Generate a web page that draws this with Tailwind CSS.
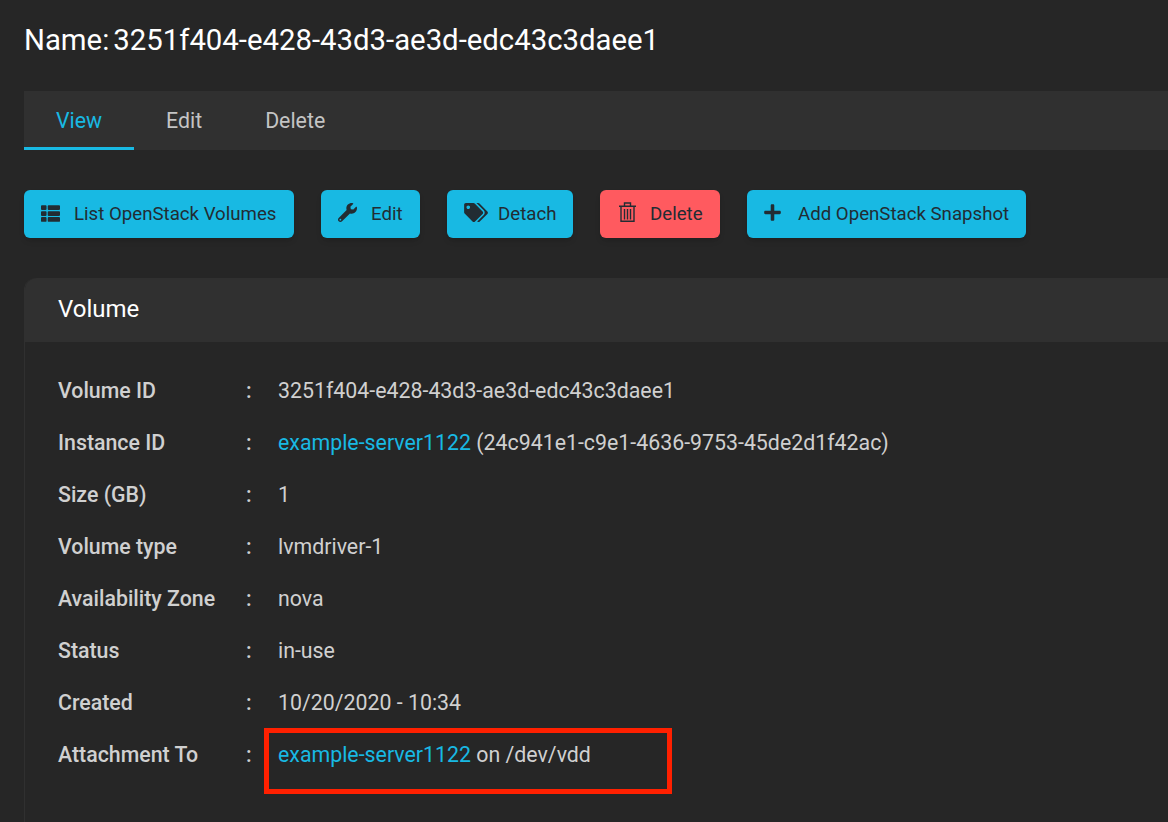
<!DOCTYPE html>
<html lang="en">
<head>
  <meta charset="UTF-8" />
  <title>Volume</title>
  <script src="https://cdn.jsdelivr.net/npm/@tailwindcss/browser@4"></script>
</head>
<body class="bg-[#262626] h-[822px] overflow-hidden font-['Roboto',sans-serif] text-[#d0d0d0]">
  <div class="relative pl-6 h-[822px] overflow-hidden">
    <!-- Title -->
    <h1 class="flex gap-[4px] pt-[22px] h-[91px] text-[29.33px] leading-[36px] text-white">
      <span>Name:</span><span>3251f404-e428-43d3-ae3d-edc43c3daee1</span>
    </h1>

    <!-- Tabs -->
    <div class="flex h-[59px] bg-[#303030] text-[21.33px]">
      <a class="w-[110px] flex items-center justify-center pt-[3px] text-[#18b9e3] border-b-[3px] border-[#18b9e3]">View</a>
      <a class="ml-[32px] flex items-center text-[#c4c4c4]">Edit</a>
      <a class="ml-[63px] flex items-center text-[#c4c4c4]">Delete</a>
    </div>

    <!-- Action buttons -->
    <div class="flex gap-[27px] mt-[40px] text-[18.67px] text-[#222c33]">
      <button class="flex items-center h-[48px] w-[270px] pl-[17px] pb-[1px] rounded-md bg-[#18b9e3] shadow-md">
        <svg class="w-[19px] h-[19px] mr-[14px] mb-[1px] fill-[#222c33]" viewBox="0 0 512 512"><path d="M149.333 216v80c0 13.255-10.745 24-24 24H24c-13.255 0-24-10.745-24-24v-80c0-13.255 10.745-24 24-24h101.333c13.255 0 24 10.745 24 24zM0 376v80c0 13.255 10.745 24 24 24h101.333c13.255 0 24-10.745 24-24v-80c0-13.255-10.745-24-24-24H24c-13.255 0-24 10.745-24 24zM125.333 32H24C10.745 32 0 42.745 0 56v80c0 13.255 10.745 24 24 24h101.333c13.255 0 24-10.745 24-24V56c0-13.255-10.745-24-24-24zm80 448H488c13.255 0 24-10.745 24-24v-80c0-13.255-10.745-24-24-24H205.333c-13.255 0-24 10.745-24 24v80c0 13.255 10.745 24 24 24zm-24-424v80c0 13.255 10.745 24 24 24H488c13.255 0 24-10.745 24-24V56c0-13.255-10.745-24-24-24H205.333c-13.255 0-24 10.745-24 24zm24 264H488c13.255 0 24-10.745 24-24v-80c0-13.255-10.745-24-24-24H205.333c-13.255 0-24 10.745-24 24v80c0 13.255 10.745 24 24 24z"/></svg>
        List OpenStack Volumes
      </button>
      <button class="flex items-center h-[48px] w-[99px] pl-[17px] pb-[1px] rounded-md bg-[#18b9e3] shadow-md">
        <svg class="w-[19px] h-[19px] mr-[14px] mb-[3px] fill-[#222c33]" viewBox="0 0 512 512"><path d="M507.73 109.1c-2.24-9.03-13.54-12.09-20.12-5.51l-74.36 74.36-67.88-11.31-11.31-67.88 74.36-74.36c6.62-6.62 3.43-17.9-5.66-20.16-47.38-11.74-99.55.91-136.58 37.93-39.64 39.64-50.55 97.1-34.05 147.2L18.74 402.76c-24.99 24.99-24.99 65.51 0 90.5 24.99 24.99 65.51 24.99 90.5 0l213.21-213.21c50.12 16.71 107.47 5.68 147.37-34.22 37.07-37.07 49.7-89.32 37.91-136.73zM64 472c-13.25 0-24-10.75-24-24 0-13.26 10.75-24 24-24s24 10.74 24 24c0 13.25-10.75 24-24 24z"/></svg>
        Edit
      </button>
      <button class="flex items-center h-[48px] w-[126px] pl-[17px] pb-[1px] rounded-md bg-[#18b9e3] shadow-md">
        <svg class="w-[24px] h-[19px] mr-[10px] mb-[3px] fill-[#222c33]" viewBox="0 0 640 512"><path d="M497.941 225.941L286.059 14.059A48 48 0 0 0 252.118 0H48C21.49 0 0 21.49 0 48v204.118a48 48 0 0 0 14.059 33.941l211.882 211.882c18.744 18.745 49.136 18.746 67.882 0l204.118-204.118c18.745-18.745 18.745-49.137 0-67.882zM112 160c-26.51 0-48-21.49-48-48s21.49-48 48-48 48 21.49 48 48-21.49 48-48 48zm513.941 133.823L421.823 497.941c-18.745 18.745-49.137 18.745-67.882 0l-.36-.36L527.64 323.522c16.999-16.999 26.36-39.6 26.36-63.64s-9.362-46.641-26.36-63.64L331.397 0h48.721a48 48 0 0 1 33.941 14.059l211.882 211.882c18.745 18.745 18.745 49.137 0 67.882z"/></svg>
        Detach
      </button>
      <button class="flex items-center h-[48px] w-[120px] pl-[19px] pb-[1px] rounded-md bg-[#ff5a5f] shadow-md">
        <svg class="w-[17px] h-[20px] mr-[14px] mb-[3px] fill-none stroke-[#222c33]" viewBox="0 0 17 20" stroke-width="1.4"><path d="M0 4.3h17M5.5 4V1h6v3M2 5v14.3h13V5M5.5 7v10.5M8.5 7v10.5M11.5 7v10.5"/></svg>
        Delete
      </button>
      <button class="flex items-center h-[48px] w-[279px] pl-[17px] pb-[1px] rounded-md bg-[#18b9e3] shadow-md">
        <svg class="w-[17px] h-[19px] mr-[17px] mb-[2px] fill-[#222c33]" viewBox="0 0 448 512"><path d="M416 208H272V64c0-17.67-14.33-32-32-32h-32c-17.67 0-32 14.33-32 32v144H32c-17.67 0-32 14.33-32 32v32c0 17.67 14.33 32 32 32h144v144c0 17.67 14.33 32 32 32h32c17.67 0 32-14.33 32-32V304h144c17.67 0 32-14.33 32-32v-32c0-17.67-14.33-32-32-32z"/></svg>
        Add OpenStack Snapshot
      </button>
    </div>

    <!-- Volume card -->
    <div class="mt-[40px] w-[1200px] rounded-tl-xl border-l border-[#303030] h-[600px]">
      <div class="h-[64px] flex items-center pl-[33px] pb-[3px] bg-[#303030] rounded-tl-xl text-[24px] text-white">Volume</div>
      <div class="pt-[23px] text-[21.33px] leading-[52px]">
        <div class="flex"><span class="w-[221px] pl-[33px] font-medium">Volume ID</span><span class="w-[32px] font-medium">:</span><span>3251f404-e428-43d3-ae3d-edc43c3daee1</span></div>
        <div class="flex"><span class="w-[221px] pl-[33px] font-medium">Instance ID</span><span class="w-[32px] font-medium">:</span><span><a class="text-[#18b9e3]">example-server1122</a> (24c941e1-c9e1-4636-9753-45de2d1f42ac)</span></div>
        <div class="flex"><span class="w-[221px] pl-[33px] font-medium">Size (GB)</span><span class="w-[32px] font-medium">:</span><span>1</span></div>
        <div class="flex"><span class="w-[221px] pl-[33px] font-medium">Volume type</span><span class="w-[32px] font-medium">:</span><span>lvmdriver-1</span></div>
        <div class="flex"><span class="w-[221px] pl-[33px] font-medium">Availability Zone</span><span class="w-[32px] font-medium">:</span><span>nova</span></div>
        <div class="flex"><span class="w-[221px] pl-[33px] font-medium">Status</span><span class="w-[32px] font-medium">:</span><span>in-use</span></div>
        <div class="flex"><span class="w-[221px] pl-[33px] font-medium">Created</span><span class="w-[32px] font-medium">:</span><span>10/20/2020 - 10:34</span></div>
        <div class="flex"><span class="w-[221px] pl-[33px] font-medium">Attachment To</span><span class="w-[32px] font-medium">:</span><span><a class="text-[#18b9e3]">example-server1122</a> on /dev/vdd</span></div>
      </div>
    </div>

    <!-- Annotation box -->
    <div class="absolute left-[264px] top-[728px] w-[408px] h-[66px] border-[5px] border-[#ff2000]"></div>
  </div>
</body>
</html>
